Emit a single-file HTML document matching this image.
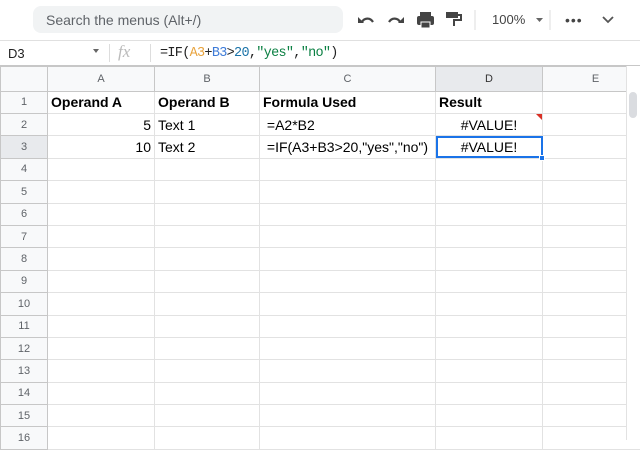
<!DOCTYPE html>
<html><head><meta charset="utf-8"><style>
*{margin:0;padding:0;box-sizing:border-box}
body{width:640px;height:440px;overflow:hidden;background:#fff;font-family:"Liberation Sans",Arial,sans-serif;position:relative}
.abs{position:absolute}
#search{left:33px;top:6px;width:310px;height:27px;background:#f1f3f4;border-radius:8px;font-size:14px;color:#5f6368;padding:6px 0 0 13px}
#fbar{left:0;top:40px;width:640px;height:26px;border-top:1px solid #e0e0e0;border-bottom:1px solid #c7c7c7}
table{position:absolute;left:0;top:66px;width:648px;border-collapse:collapse;table-layout:fixed;font-size:14px}
td{border:1px solid #e2e2e2;height:22.4px;padding:0 3px;white-space:nowrap;overflow:visible}
td.h{background:#f8f9fa;color:#5f6368;text-align:center;font-size:11px;border-color:#c7c7c7}
tr.ch td{height:24.6px;background:#f8f9fa;color:#5f6368;text-align:center;font-size:11px;border-color:#c7c7c7}
b{font-weight:bold}
.r{text-align:right}
</style></head><body>
<div id="search" class="abs">Search the menus (Alt+/)</div>
<svg class="abs" style="left:355px;top:8px" width="200" height="24" viewBox="0 0 200 24">
<path d="M7 14c2-4 8-5 11 0" stroke="#444" stroke-width="2.2" fill="none"/><path d="M3 9v6h6z" fill="#444"/>
<path d="M45 14c-2-4-8-5-11 0" stroke="#444" stroke-width="2.2" fill="none"/><path d="M49 9v6h-6z" fill="#444"/>
<rect x="62" y="8" width="17" height="9" rx="2" fill="#444"/><rect x="65" y="4" width="11" height="4" fill="#444"/><rect x="66" y="14" width="9" height="6" fill="#444" stroke="#fff" stroke-width="1"/>
<rect x="91" y="4" width="12" height="6" fill="#444"/><path d="M103 7h3v5h-7v6" stroke="#444" stroke-width="2" fill="none"/>
<line x1="120" y1="2" x2="120" y2="22" stroke="#ddd"/>
<text x="137" y="16" font-size="13" fill="#444" font-family="Liberation Sans">100%</text>
<path d="M181 10h7l-3.5 4z" fill="#666"/>
<line x1="195" y1="2" x2="195" y2="22" stroke="#ddd"/>
</svg>
<div class="abs" style="left:565px;top:12px;font-size:14px;color:#444;letter-spacing:1px">•••</div>
<svg class="abs" style="left:600px;top:12px" width="20" height="16"><path d="M3 5l5 5 5-5" stroke="#555" stroke-width="1.8" fill="none"/></svg>
<div id="fbar" class="abs">
<div class="abs" style="left:8px;top:5px;font-size:13px;color:#222">D3</div>
<div class="abs" style="left:93px;top:8px;width:0;height:0;border:3.5px solid transparent;border-top:4px solid #666"></div>
<div class="abs" style="left:109px;top:3px;width:1px;height:18px;background:#ddd"></div>
<div class="abs" style="left:118px;top:1px;font-size:17px;color:#bbb;font-style:italic;font-family:'Liberation Serif',serif">fx</div>
<div class="abs" style="left:150px;top:3px;width:1px;height:18px;background:#ddd"></div>
<div class="abs" style="left:160px;top:5px;font-size:13.5px;font-family:'Liberation Mono',monospace;letter-spacing:-0.7px;color:#222">=IF(<span style="color:#e8a33d">A3</span>+<span style="color:#3d7bd8">B3</span>&gt;<span style="color:#1a73a8">20</span>,<span style="color:#0b8043">"yes"</span>,<span style="color:#0b8043">"no"</span>)</div>
</div>
<table>
<colgroup><col style="width:47px"><col style="width:107px"><col style="width:105px"><col style="width:176px"><col style="width:107px"><col style="width:106px"></colgroup>
<tr class="ch"><td></td><td>A</td><td>B</td><td>C</td><td style="background:#e8eaed;color:#333">D</td><td>E</td></tr>
<tr><td class="h">1</td><td><b>Operand A</b></td><td><b>Operand B</b></td><td><b>Formula Used</b></td><td><b>Result</b></td><td></td></tr>
<tr><td class="h">2</td><td class="r">5</td><td>Text 1</td><td>&nbsp;=A2*B2</td><td style="text-align:center;position:relative">#VALUE!<div class="abs" style="right:0;top:0;border-left:6px solid transparent;border-top:6px solid #d93025"></div></td><td></td></tr>
<tr><td class="h" style="background:#e8eaed">3</td><td class="r">10</td><td>Text 2</td><td>&nbsp;=IF(A3+B3&gt;20,"yes","no")</td><td style="text-align:center;position:relative;outline:2px solid #1a73e8;outline-offset:-2px">#VALUE!<div class="abs" style="right:-3px;bottom:-3px;width:6px;height:6px;background:#1a73e8;border:1px solid #fff"></div></td><td></td></tr>
<tr><td class="h">4</td><td></td><td></td><td></td><td></td><td></td></tr>
<tr><td class="h">5</td><td></td><td></td><td></td><td></td><td></td></tr>
<tr><td class="h">6</td><td></td><td></td><td></td><td></td><td></td></tr>
<tr><td class="h">7</td><td></td><td></td><td></td><td></td><td></td></tr>
<tr><td class="h">8</td><td></td><td></td><td></td><td></td><td></td></tr>
<tr><td class="h">9</td><td></td><td></td><td></td><td></td><td></td></tr>
<tr><td class="h">10</td><td></td><td></td><td></td><td></td><td></td></tr>
<tr><td class="h">11</td><td></td><td></td><td></td><td></td><td></td></tr>
<tr><td class="h">12</td><td></td><td></td><td></td><td></td><td></td></tr>
<tr><td class="h">13</td><td></td><td></td><td></td><td></td><td></td></tr>
<tr><td class="h">14</td><td></td><td></td><td></td><td></td><td></td></tr>
<tr><td class="h">15</td><td></td><td></td><td></td><td></td><td></td></tr>
<tr><td class="h">16</td><td></td><td></td><td></td><td></td><td></td></tr>
</table>
<div class="abs" style="left:626px;top:66px;width:14px;height:374px;background:#fff;border-left:1px solid #e2e2e2"></div>
<div class="abs" style="left:629px;top:92px;width:8px;height:26px;border-radius:4px;background:#dadce0"></div>
</body></html>
